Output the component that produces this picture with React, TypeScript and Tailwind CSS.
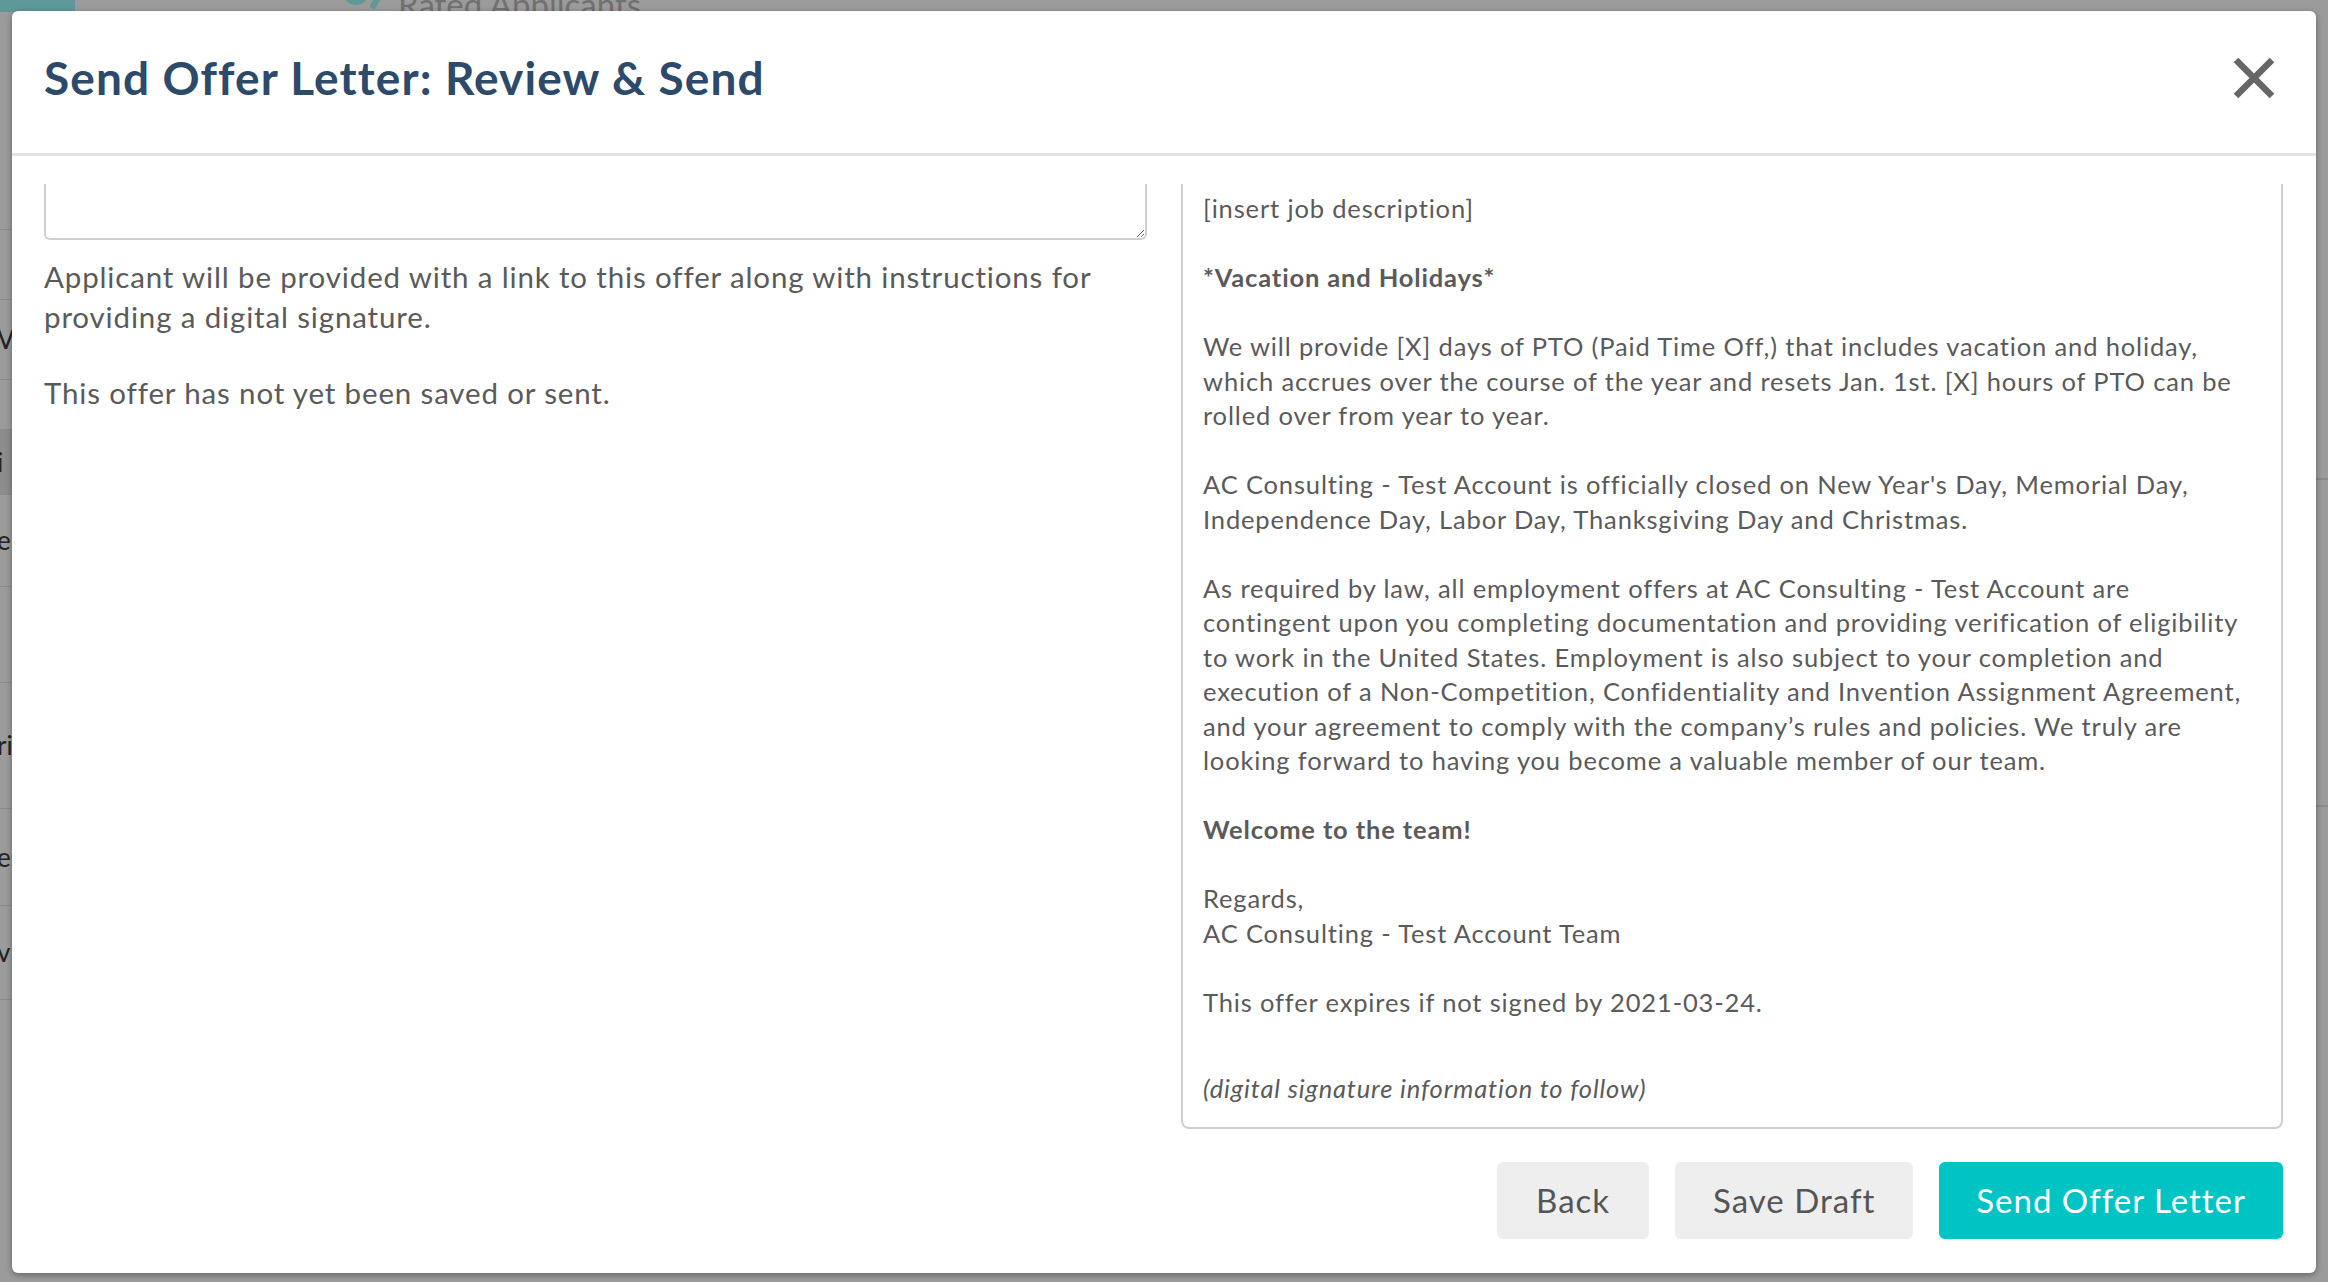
import React from "react";

const font = { fontFamily: "Lato, 'Open Sans', Arial, sans-serif" };

function CloseIcon() {
  return (
    <svg width="44" height="44" viewBox="0 0 44 44" className="block">
      <line x1="4" y1="4" x2="40" y2="40" stroke="#666666" strokeWidth="6.5" />
      <line x1="40" y1="4" x2="4" y2="40" stroke="#666666" strokeWidth="6.5" />
    </svg>
  );
}

function Backdrop() {
  // the app page behind the dimmed overlay; only its edges peek out
  const rows = [
    { h: 60, t: "" },
    { h: 70, t: "" },
    { h: 80, t: "V" },
    { h: 50, t: "" },
    { h: 65, t: "i", dark: true },
    { h: 92, t: "e" },
    { h: 96, t: "" },
    { h: 126, t: "ri" },
    { h: 97, t: "es" },
    { h: 94, t: "vi" },
  ];
  return (
    <div className="absolute inset-0 bg-[#9b9b9b]">
      <div className="flex h-[12px]">
        <div className="w-[75px] bg-[#5f9898]" />
        <svg width="48" height="40" viewBox="0 0 48 40" className="ml-[267px] -mt-[22px]">
          <circle cx="14" cy="14" r="10" fill="none" stroke="#5f9898" strokeWidth="6" />
          <path d="M30 30 L44 6" stroke="#5f9898" strokeWidth="6" />
        </svg>
        <div className="ml-[8px] -mt-[12px] text-[33px] text-[#707070] leading-none">Rated Applicants</div>
      </div>
      <div className="flex flex-col w-[40px] mt-[158px] text-[26px] text-[#222]">
        {rows.map((r, i) => (
          <div
            key={i}
            className={`flex items-center border-b border-[#8a8a8a] -ml-[3px] ${r.dark ? "bg-[#8c8c8c]" : ""}`}
            style={{ height: r.h }}
          >
            {r.t}
          </div>
        ))}
      </div>
      <div className="absolute right-0 top-[478px] w-[20px] border-t-2 border-[#8a8a8a]" />
      <div className="absolute right-0 top-[805px] w-[20px] border-t-2 border-[#8a8a8a]" />
    </div>
  );
}

export default function App() {
  return (
    <div className="relative w-[2328px] h-[1282px] overflow-hidden" style={font}>
      <Backdrop />
      <div className="absolute left-[12px] top-[11px] w-[2304px] h-[1262px] bg-white rounded-[6px] shadow-[0_2px_6px_rgba(0,0,0,0.35)] flex flex-col">
        <div className="h-[145px] shrink-0 flex items-center justify-between pl-[32px] pr-[40px] pb-[8px] border-b-[3px] border-[#e2e2e2]">
          <h1 className="text-[46px] font-bold text-[#2d4a6b] leading-none tracking-[1.1px]">
            Send Offer Letter: Review &amp; Send
          </h1>
          <CloseIcon />
        </div>

        <div className="flex-1 flex flex-col px-[32px] pt-[28px]">
          <div className="flex gap-[34px]">
            <div className="w-[1103px] shrink-0">
              <textarea
                readOnly
                className="block w-full h-[56px] border-2 border-t-0 border-[#cfcfcf] rounded-b-[6px] outline-none resize-y"
              />
              <p className="mt-[17px] text-[29.5px] leading-[40px] tracking-[0.85px] text-[#5a5a5a]">
                Applicant will be provided with a link to this offer along with instructions for providing a digital
                signature.
              </p>
              <p className="mt-[36px] text-[29.5px] leading-[40px] tracking-[0.85px] text-[#5a5a5a]">
                This offer has not yet been saved or sent.
              </p>
            </div>

            <div className="w-[1102px] shrink-0 h-[945px] border-2 border-t-0 border-[#cfcfcf] rounded-b-[8px] px-[20px] pt-[7px] text-[25.5px] leading-[34.5px] tracking-[0.85px] text-[#5a5a5a]">
              <p>[insert job description]</p>
              <p className="mt-[34.5px] font-bold">*Vacation and Holidays*</p>
              <p className="mt-[34.5px]">
                We will provide [X] days of PTO (Paid Time Off,) that includes vacation and holiday, which accrues over
                the course of the year and resets Jan. 1st. [X] hours of PTO can be rolled over from year to year.
              </p>
              <p className="mt-[34.5px]">
                AC Consulting - Test Account is officially closed on New Year's Day, Memorial Day, Independence Day,
                Labor Day, Thanksgiving Day and Christmas.
              </p>
              <p className="mt-[34.5px]">
                As required by law, all employment offers at AC Consulting - Test Account are contingent upon you
                completing documentation and providing verification of eligibility to work in the United States.
                Employment is also subject to your completion and execution of a Non-Competition, Confidentiality and
                Invention Assignment Agreement, and your agreement to comply with the company’s rules and policies. We
                truly are looking forward to having you become a valuable member of our team.
              </p>
              <p className="mt-[34.5px] font-bold">Welcome to the team!</p>
              <p className="mt-[34.5px]">
                Regards,
                <br />
                AC Consulting - Test Account Team
              </p>
              <p className="mt-[34.5px]">This offer expires if not signed by 2021-03-24.</p>
              <p className="mt-[52px] italic">(digital signature information to follow)</p>
            </div>
          </div>

          <div className="flex justify-end gap-[26px] mt-[33px] pr-[1px] tracking-[1px]">
            <button className="h-[77px] px-[39px] rounded-[6px] bg-[#eeeeee] text-[33px] text-[#555555]">Back</button>
            <button className="h-[77px] px-[38px] rounded-[6px] bg-[#eeeeee] text-[33px] text-[#555555]">
              Save Draft
            </button>
            <button className="h-[77px] px-[37px] rounded-[6px] bg-[#00c4c4] text-[33px] text-white">
              Send Offer Letter
            </button>
          </div>
        </div>
      </div>
    </div>
  );
}
